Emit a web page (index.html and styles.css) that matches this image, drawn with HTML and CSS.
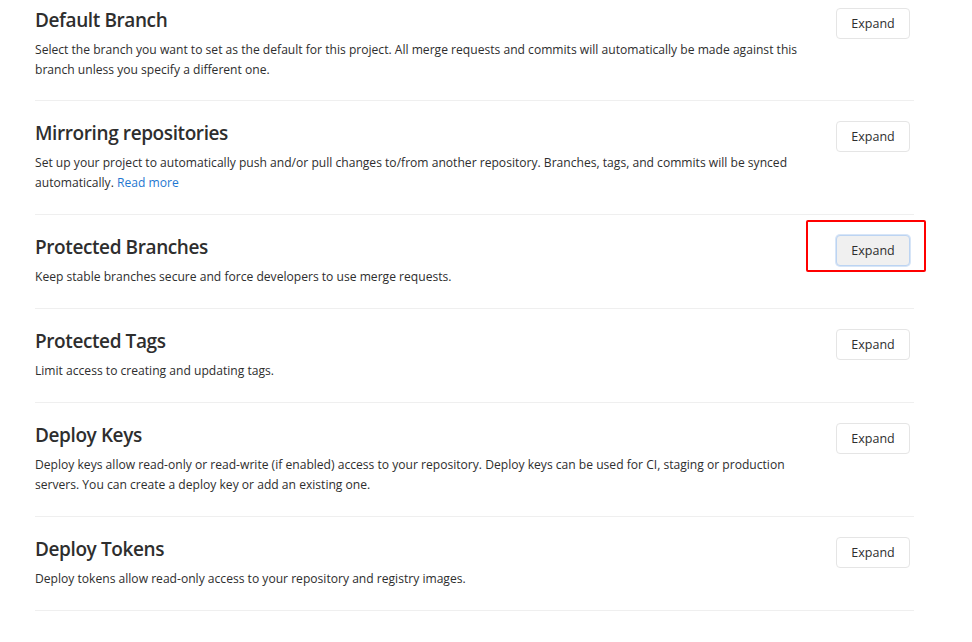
FILE: index.html
```html
<!DOCTYPE html>
<html>
<head>
<meta charset="utf-8">
<link rel="stylesheet" href="styles.css">
</head>
<body>
<main class="page">
  <section class="setting setting-first">
    <div class="setting-text">
      <h4 class="setting-title">Default Branch</h4>
      <p class="setting-desc">Select the branch you want to set as the default for this project. All merge requests and commits will automatically be made against this branch unless you specify a different one.</p>
    </div>
    <div class="btn-wrap"><button class="btn">Expand</button></div>
  </section>
  <section class="setting">
    <div class="setting-text">
      <h4 class="setting-title">Mirroring repositories</h4>
      <p class="setting-desc">Set up your project to automatically push and/or pull changes to/from another repository. Branches, tags, and commits will be synced automatically. <a class="link" href="#">Read more</a></p>
    </div>
    <div class="btn-wrap"><button class="btn">Expand</button></div>
  </section>
  <section class="setting">
    <div class="setting-text">
      <h4 class="setting-title">Protected Branches</h4>
      <p class="setting-desc">Keep stable branches secure and force developers to use merge requests.</p>
    </div>
    <div class="btn-wrap"><button class="btn btn-focus">Expand</button><span class="highlight"></span></div>
  </section>
  <section class="setting">
    <div class="setting-text">
      <h4 class="setting-title">Protected Tags</h4>
      <p class="setting-desc">Limit access to creating and updating tags.</p>
    </div>
    <div class="btn-wrap"><button class="btn">Expand</button></div>
  </section>
  <section class="setting">
    <div class="setting-text">
      <h4 class="setting-title">Deploy Keys</h4>
      <p class="setting-desc">Deploy keys allow read-only or read-write (if enabled) access to your repository. Deploy keys can be used for CI, staging or production servers. You can create a deploy key or add an existing one.</p>
    </div>
    <div class="btn-wrap"><button class="btn">Expand</button></div>
  </section>
  <section class="setting">
    <div class="setting-text">
      <h4 class="setting-title">Deploy Tokens</h4>
      <p class="setting-desc">Deploy tokens allow read-only access to your repository and registry images.</p>
    </div>
    <div class="btn-wrap"><button class="btn">Expand</button></div>
  </section>
</main>
</body>
</html>
```

FILE: styles.css
```css
* { box-sizing: border-box; }
html, body { margin: 0; padding: 0; background: #fff; }
body {
  font-family: "Open Sans", "Noto Sans", "Liberation Sans", sans-serif;
  color: #2e2e2e;
}
.page {
  width: 879px;
  margin-left: 35px;
}
.setting {
  display: flex;
  align-items: flex-start;
  padding: 20px 0 21px;
  border-bottom: 1px solid #efefef;
}
.setting-first { padding-top: 8px; padding-bottom: 20px; }
.setting-text {
  flex: 1;
  padding-right: 18px;
}
.setting-title {
  margin: 0;
  font-size: 19px;
  line-height: 24px;
  font-weight: 600;
  letter-spacing: -0.4px;
  color: #2e2e2e;
}
.setting-desc {
  margin: 8px 0 0;
  font-size: 12.1px;
  line-height: 20px;
  color: #2e2e2e;
}
.link { color: #1f78d1; text-decoration: none; }
.btn-wrap {
  position: relative;
  margin-right: 4px;
}
.btn {
  display: block;
  width: 74px;
  height: 31px;
  padding: 0;
  font-family: inherit;
  font-size: 12.5px;
  color: #2e2e2e;
  background: #fff;
  border: 1px solid #e5e5e5;
  border-radius: 4px;
}
.btn-focus {
  background: #f0f0f0;
  border-color: #bcd4f2;
  box-shadow: 0 0 0 1px #d7e5f7;
}
.highlight {
  position: absolute;
  left: -30px;
  top: -15px;
  width: 120px;
  height: 52px;
  border: 2px solid #f00;
  border-radius: 2px;
  pointer-events: none;
}
```
